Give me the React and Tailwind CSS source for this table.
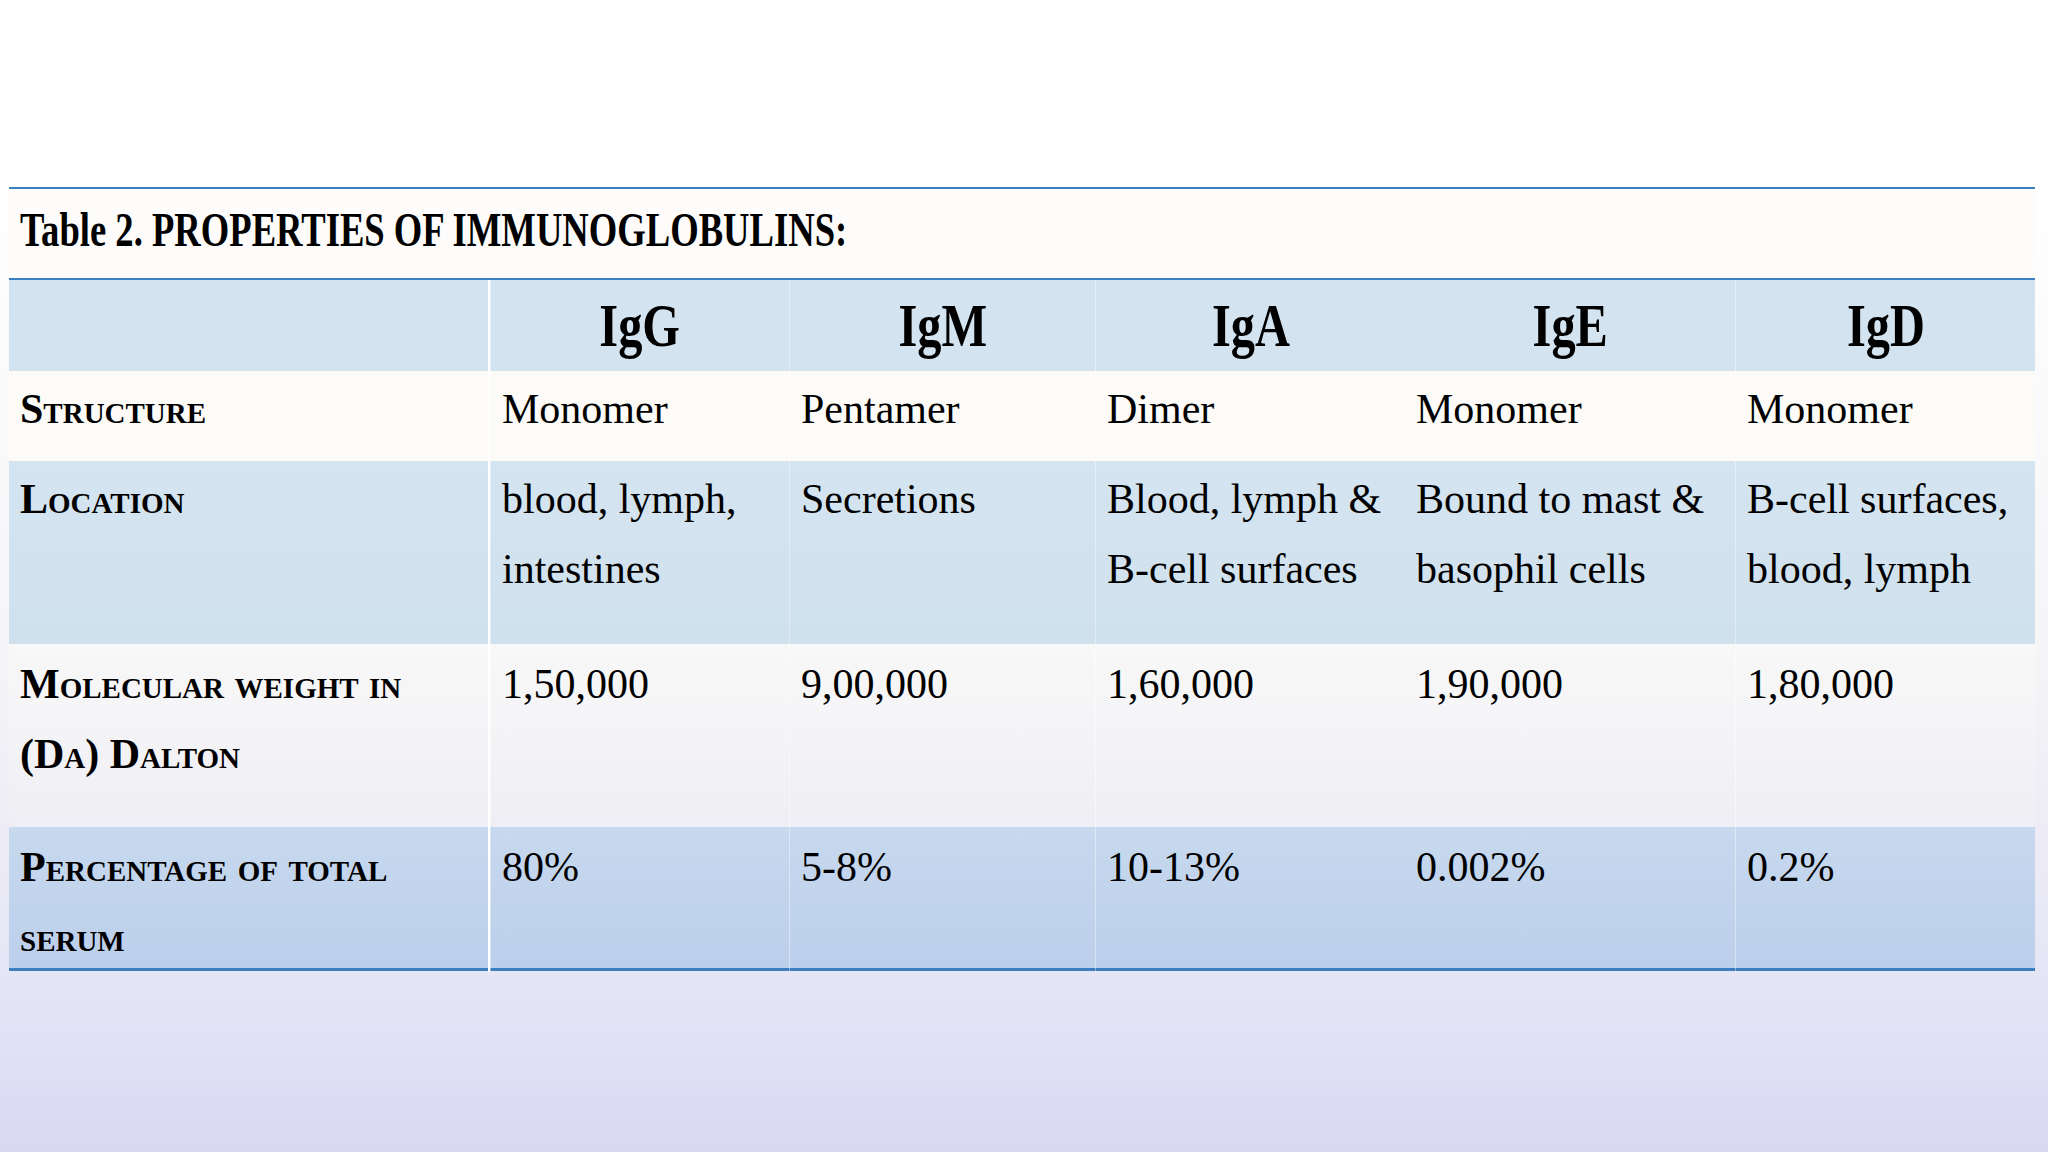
import React from 'react'

const cols = 'grid grid-cols-[481px_299px_306px_310px_330px_300px]'

const rows = [
  {
    label: ['Structure'],
    cells: ['Monomer', 'Pentamer', 'Dimer', 'Monomer', 'Monomer'],
    height: 'h-[90px]',
    bg: 'bg-[#fcfbf8]',
    pt: 'pt-[3px]',
  },
  {
    label: ['Location'],
    cells: ['blood, lymph, intestines', 'Secretions', 'Blood, lymph & B-cell surfaces', 'Bound to mast & basophil cells', 'B-cell surfaces, blood, lymph'],
    height: 'h-[183px]',
    bg: 'bg-linear-to-b from-[#d4e4f0] to-[#d0e1ee]',
    pt: 'pt-[3px]',
  },
  {
    label: ['Molecular weight in', '(Da) Dalton'],
    cells: ['1,50,000', '9,00,000', '1,60,000', '1,90,000', '1,80,000'],
    height: 'h-[183px]',
    bg: 'bg-linear-to-b from-[#f9f8f8] to-[#efeef4]',
    pt: 'pt-[5px]',
  },
  {
    label: ['Percentage of total', 'serum'],
    cells: ['80%', '5-8%', '10-13%', '0.002%', '0.2%'],
    height: 'h-[141px]',
    bg: 'bg-linear-to-b from-[#c7d9ee] to-[#bccfeb]',
    pt: 'pt-[5px]',
  },
]

// divider between IgA and IgE is not drawn in the slide
const divider = ['border-l border-white/40', 'border-l border-white/40', 'border-l border-white/40', '', 'border-l border-white/40']

function Row({ row }) {
  return (
    <div className={`${cols} ${row.height} ${row.bg}`}>
      <div className={`border-r-2 border-white pl-[11px] ${row.pt} text-[42px] font-bold leading-[70px] [font-variant:small-caps]`}>
        {row.label.map((l) => (
          <div key={l}>{l}</div>
        ))}
      </div>
      {row.cells.map((c, i) => (
        <div key={i} className={`${divider[i]} pl-[11px] pr-2 ${row.pt} text-[42px] leading-[70px]`}>
          {c}
        </div>
      ))}
    </div>
  )
}

export default function App() {
  return (
    <div className="h-[1152px] w-full overflow-hidden bg-[linear-gradient(to_bottom,#ffffff_0%,#ffffff_16%,#f4f3f6_60%,#e6e5f6_85%,#d9d8f3_100%)] font-['Liberation_Serif',serif] text-black">
      <div className="h-[187px]" />
      <div className="ml-[9px] w-[2026px]">
        <div className="h-[2px] bg-[#3b7fc1]" />
        <div className="flex h-[89px] items-center bg-[#fdfcfa] pl-[11px] pb-[8px]">
          <span className="inline-block origin-left scale-x-[0.763] whitespace-nowrap text-[48px] font-bold leading-none">
            Table 2. PROPERTIES OF IMMUNOGLOBULINS:
          </span>
        </div>
        <div className="h-[2px] bg-[#3b7fc1]" />
        <div className={`${cols} h-[91px] bg-[#d3e4f0]`}>
          <div className="border-r-2 border-white" />
          {['IgG', 'IgM', 'IgA', 'IgE', 'IgD'].map((h, i) => (
            <div key={h} className={`${divider[i]} flex items-center justify-center pb-[2px]`}>
              <span className="inline-block scale-x-[0.78] text-[62px] font-bold leading-none">{h}</span>
            </div>
          ))}
        </div>
        {rows.map((r) => (
          <Row key={r.label[0]} row={r} />
        ))}
        <div className="h-[3px] bg-[#3b7fc1]" />
      </div>
    </div>
  )
}
